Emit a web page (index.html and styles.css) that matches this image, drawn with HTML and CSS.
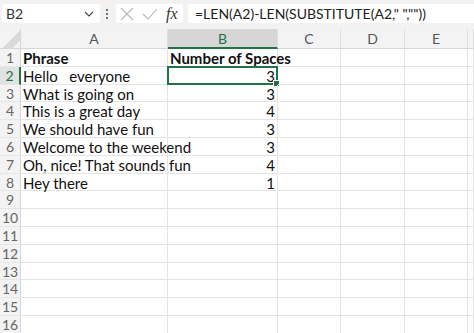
FILE: index.html
```html
<!DOCTYPE html>
<html lang="en">
<head>
    <meta charset="UTF-8">
    <title>Count Spaces - Sheet</title>
    <link rel="stylesheet" href="styles.css">
</head>
<body>
    <!-- Formula bar -->
    <div class="formula-bar">
        <div class="name-box">
            <span>B2</span>
            <svg class="chevron" width="10" height="6" viewBox="0 0 10 6"><path d="M1 1 L5 5 L9 1" fill="none" stroke="#444" stroke-width="1.1"/></svg>
        </div>
        <div class="dots">
            <span></span><span></span><span></span>
        </div>
        <div class="fx-box">
            <svg width="14" height="14" viewBox="0 0 14 14"><path d="M1 1 L13 13 M13 1 L1 13" stroke="#b5b5b5" stroke-width="1.1"/></svg>
            <svg width="16" height="14" viewBox="0 0 16 14"><path d="M1 7 L6 12 L15 2" fill="none" stroke="#b5b5b5" stroke-width="1.1"/></svg>
            <span class="fx">fx</span>
        </div>
        <div class="formula">=LEN(A2)-LEN(SUBSTITUTE(A2," ",""))</div>
    </div>

    <!-- Sheet -->
    <div class="sheet">
        <div class="corner"></div>
        <div class="col-head">A</div>
        <div class="col-head active">B</div>
        <div class="col-head">C</div>
        <div class="col-head">D</div>
        <div class="col-head">E</div>
        <div class="col-head"></div>

        <div class="row-head">1</div>
        <div class="cell bold">Phrase</div>
        <div class="cell bold">Number of Spaces</div>
        <div class="cell"></div><div class="cell"></div><div class="cell"></div><div class="cell"></div>

        <div class="row-head active">2</div>
        <div class="cell">Hello&nbsp;&nbsp; everyone</div>
        <div class="cell num selected">3<span class="handle"></span></div>
        <div class="cell"></div><div class="cell"></div><div class="cell"></div><div class="cell"></div>

        <div class="row-head">3</div>
        <div class="cell">What is going on</div>
        <div class="cell num">3</div>
        <div class="cell"></div><div class="cell"></div><div class="cell"></div><div class="cell"></div>

        <div class="row-head">4</div>
        <div class="cell">This is a great day</div>
        <div class="cell num">4</div>
        <div class="cell"></div><div class="cell"></div><div class="cell"></div><div class="cell"></div>

        <div class="row-head">5</div>
        <div class="cell">We should have fun</div>
        <div class="cell num">3</div>
        <div class="cell"></div><div class="cell"></div><div class="cell"></div><div class="cell"></div>

        <div class="row-head">6</div>
        <div class="cell">Welcome to the weekend</div>
        <div class="cell num">3</div>
        <div class="cell"></div><div class="cell"></div><div class="cell"></div><div class="cell"></div>

        <div class="row-head">7</div>
        <div class="cell">Oh, nice! That sounds fun</div>
        <div class="cell num">4</div>
        <div class="cell"></div><div class="cell"></div><div class="cell"></div><div class="cell"></div>

        <div class="row-head">8</div>
        <div class="cell">Hey there</div>
        <div class="cell num">1</div>
        <div class="cell"></div><div class="cell"></div><div class="cell"></div><div class="cell"></div>

        <div class="row-head">9</div>
        <div class="cell"></div><div class="cell"></div><div class="cell"></div><div class="cell"></div><div class="cell"></div><div class="cell"></div>
        <div class="row-head">10</div>
        <div class="cell"></div><div class="cell"></div><div class="cell"></div><div class="cell"></div><div class="cell"></div><div class="cell"></div>
        <div class="row-head">11</div>
        <div class="cell"></div><div class="cell"></div><div class="cell"></div><div class="cell"></div><div class="cell"></div><div class="cell"></div>
        <div class="row-head">12</div>
        <div class="cell"></div><div class="cell"></div><div class="cell"></div><div class="cell"></div><div class="cell"></div><div class="cell"></div>
        <div class="row-head">13</div>
        <div class="cell"></div><div class="cell"></div><div class="cell"></div><div class="cell"></div><div class="cell"></div><div class="cell"></div>
        <div class="row-head">14</div>
        <div class="cell"></div><div class="cell"></div><div class="cell"></div><div class="cell"></div><div class="cell"></div><div class="cell"></div>
        <div class="row-head">15</div>
        <div class="cell"></div><div class="cell"></div><div class="cell"></div><div class="cell"></div><div class="cell"></div><div class="cell"></div>
        <div class="row-head">16</div>
        <div class="cell"></div><div class="cell"></div><div class="cell"></div><div class="cell"></div><div class="cell"></div><div class="cell"></div>
    </div>
</body>
</html>
```

FILE: styles.css
```css
body {
    margin: 0;
    padding: 0;
    width: 474px;
    height: 333px;
    overflow: hidden;
    background-color: #fff;
    font-family: Lato, "Liberation Sans", sans-serif;
    color: #222;
}
.formula-bar {
    display: flex;
    align-items: center;
    height: 29px;
    padding: 0 0 2px 2px;
    box-sizing: border-box;
    background-color: #f3f2f1;
}
.name-box {
    display: flex;
    align-items: center;
    justify-content: space-between;
    width: 98px;
    height: 19px;
    padding: 0 6px 0 4px;
    box-sizing: border-box;
    background-color: #fff;
    border-radius: 3px;
    font-size: 14px;
    color: #333;
}
.dots {
    display: flex;
    flex-direction: column;
    gap: 2px;
    margin: 0 8px 0 6px;
}
.dots span {
    width: 2px;
    height: 2px;
    background-color: #444;
    border-radius: 1px;
}
.fx-box {
    display: flex;
    align-items: center;
    gap: 8px;
    width: 67px;
    height: 19px;
    padding-left: 4px;
    box-sizing: border-box;
    background-color: #fff;
    border-radius: 3px;
}
.fx {
    font-family: "Liberation Serif", serif;
    font-style: italic;
    font-size: 16px;
    color: #333;
}
.formula {
    flex: 1;
    height: 19px;
    line-height: 19px;
    margin-left: 5px;
    padding-left: 7px;
    background-color: #fff;
    border-radius: 3px 0 0 3px;
    font-size: 14px;
    color: #222;
}
.sheet {
    display: grid;
    grid-template-columns: 21px 147px 110px 63px 64px 63px 1fr;
    grid-template-rows: 20px;
    grid-auto-rows: 17.8px;
    font-size: 15px;
}
.corner {
    background: linear-gradient(135deg, #f3f3f3 55%, #d9d9d9 55%, #d9d9d9 80%, #f3f3f3 80%);
    border-bottom: 1px solid #d6d6d6;
    border-right: 1px solid #d6d6d6;
    box-sizing: border-box;
}
.col-head {
    background-color: #f3f3f3;
    border-right: 1px solid #dedede;
    border-bottom: 1px solid #d6d6d6;
    box-sizing: border-box;
    text-align: center;
    line-height: 20px;
    font-size: 14px;
    color: #555;
}
.col-head.active {
    background-color: #d6d6d6;
    border-bottom: 2px solid #217346;
    color: #217346;
}
.row-head {
    background-color: #f3f3f3;
    border-right: 1px solid #d6d6d6;
    border-bottom: 1px solid #e6e6e6;
    box-sizing: border-box;
    text-align: center;
    font-size: 14px;
    line-height: 18px;
    color: #666;
}
.row-head.active {
    background-color: #e2e2e2;
    border-right: 2px solid #217346;
    color: #217346;
}
.cell {
    position: relative;
    border-right: 1px solid #e4e4e4;
    border-bottom: 1px solid #e4e4e4;
    box-sizing: border-box;
    padding: 0 2px;
    line-height: 18px;
    white-space: nowrap;
    color: #111;
}
.bold {
    font-weight: bold;
}
.num {
    text-align: right;
}
.selected {
    border: 2px solid #217346;
    margin: -1px 0 0 -1px;
    line-height: 16px;
    padding-right: 1px;
}
.handle {
    position: absolute;
    right: -4px;
    bottom: -4px;
    width: 5px;
    height: 5px;
    background-color: #217346;
    border: 1px solid #fff;
}
```
